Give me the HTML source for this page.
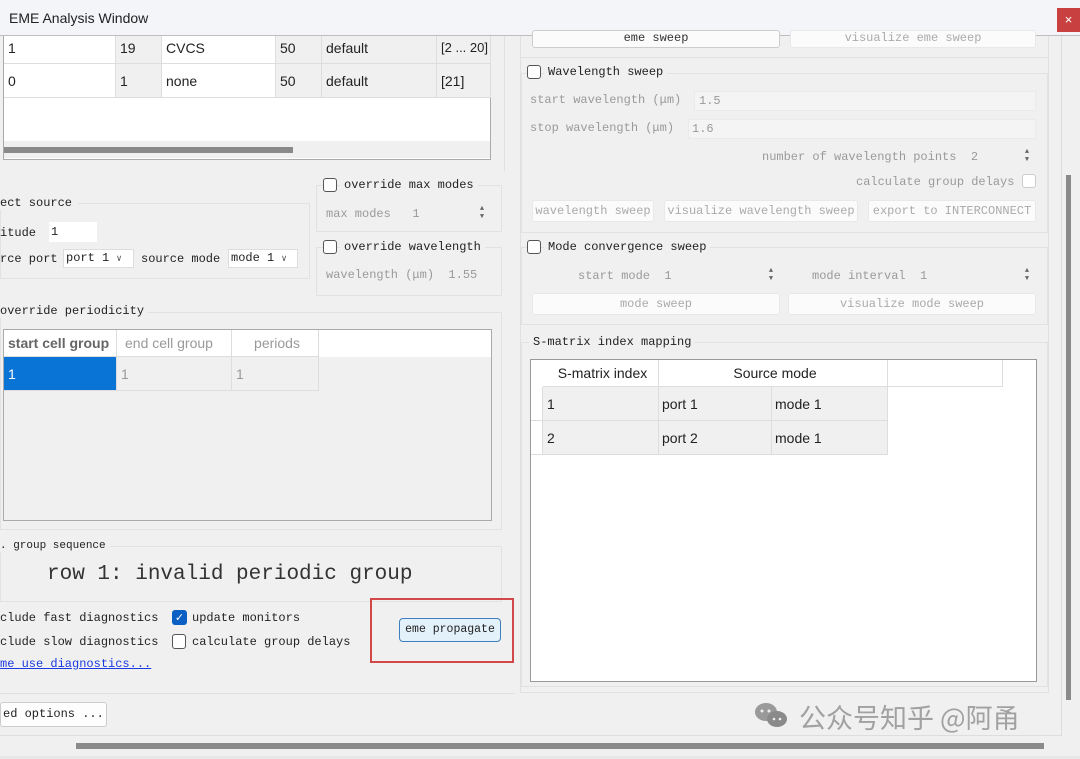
<!DOCTYPE html>
<html><head><meta charset="utf-8">
<style>
*{box-sizing:border-box;margin:0;padding:0}
body{width:1080px;height:759px;overflow:hidden;background:#f0f0f0;position:relative;font-family:"Liberation Mono",monospace;font-size:12px;color:#222}
.a{position:absolute}
.sans{font-family:"Liberation Sans",sans-serif}
.m{font-family:"Liberation Mono",monospace;font-size:12px;white-space:nowrap}
.g{color:#9a9a9a}
.grp{position:absolute;border:1px solid #e2e2e2}
.cb{position:absolute;width:14px;height:14px;border:1px solid #555;border-radius:3px;background:#fff}
.btn{position:absolute;background:#fbfbfb;border:1px solid #e8e8e8;border-radius:3px;text-align:center;color:#aaa;font-family:"Liberation Mono",monospace;font-size:12px;white-space:nowrap}
.inp{position:absolute;background:#f4f4f4;border:1px solid #eaeaea}
.cell{position:absolute;font-family:"Liberation Sans",sans-serif;font-size:14px;padding-left:4px;border-right:1px solid #ddd;border-bottom:1px solid #ddd}
.spin{position:absolute;width:10px;height:16px;font-size:7px;line-height:8px;color:#666;text-align:center}
</style></head><body>
<!-- title bar -->
<div class="a" style="left:0;top:0;width:1080px;height:36px;background:#f3f5f9;border-bottom:1px solid #bdbdbd"></div>
<div class="a sans" style="left:9px;top:10px;font-size:14px;color:#222">EME Analysis Window</div>
<div class="a" style="left:1057px;top:8px;width:23px;height:24px;background:#c94040;color:#fff;text-align:center;font:13px/24px 'Liberation Sans',sans-serif">×</div>

<!-- top table -->
<div class="a" style="left:3px;top:36px;width:488px;height:124px;background:#fff;border:1px solid #aaa;border-top:none"></div>
<div class="cell" style="left:4px;top:36px;width:112px;height:28px;line-height:24px;background:#fff">1</div>
<div class="cell" style="left:116px;top:36px;width:46px;height:28px;line-height:24px;background:#f0f0f0">19</div>
<div class="cell" style="left:162px;top:36px;width:114px;height:28px;line-height:24px;background:#fff">CVCS</div>
<div class="cell" style="left:276px;top:36px;width:46px;height:28px;line-height:24px;background:#f0f0f0">50</div>
<div class="cell" style="left:322px;top:36px;width:115px;height:28px;line-height:24px;background:#f0f0f0">default</div>
<div class="cell" style="left:437px;top:36px;width:54px;height:28px;line-height:24px;background:#f0f0f0;font-size:13px">[2 ... 20]</div>
<div class="cell" style="left:4px;top:64px;width:112px;height:34px;line-height:34px;background:#fff">0</div>
<div class="cell" style="left:116px;top:64px;width:46px;height:34px;line-height:34px;background:#f0f0f0">1</div>
<div class="cell" style="left:162px;top:64px;width:114px;height:34px;line-height:34px;background:#fff">none</div>
<div class="cell" style="left:276px;top:64px;width:46px;height:34px;line-height:34px;background:#f0f0f0">50</div>
<div class="cell" style="left:322px;top:64px;width:115px;height:34px;line-height:34px;background:#f0f0f0">default</div>
<div class="cell" style="left:437px;top:64px;width:54px;height:34px;line-height:34px;background:#f0f0f0">[21]</div>
<div class="a" style="left:4px;top:141px;width:486px;height:17px;background:#f0f0f0"></div>
<div class="a" style="left:4px;top:147px;width:289px;height:6px;background:#8a8a8a"></div>
<div class="a" style="left:504px;top:36px;width:1px;height:135px;background:#e0e0e0"></div>

<!-- source group -->
<div class="grp" style="left:0;top:203px;width:310px;height:76px"></div>
<div class="a m" style="left:0;top:196px;background:#f0f0f0;padding-right:6px">ect source</div>
<div class="a m" style="left:0;top:226px">itude</div>
<div class="a m" style="left:49px;top:222px;width:48px;height:20px;background:#fff;line-height:20px;padding-left:2px">1</div>
<div class="a m" style="left:0;top:252px">rce port</div>
<div class="a m" style="left:63px;top:249px;width:71px;height:19px;background:#fff;border:1px solid #ddd;line-height:17px;padding-left:2px">port 1 <span style="font-size:9px;color:#555">&#8744;</span></div>
<div class="a m" style="left:141px;top:252px">source mode</div>
<div class="a m" style="left:228px;top:249px;width:70px;height:19px;background:#fff;border:1px solid #ddd;line-height:17px;padding-left:2px">mode 1 <span style="font-size:9px;color:#555">&#8744;</span></div>

<!-- override max modes -->
<div class="grp" style="left:316px;top:185px;width:186px;height:47px"></div>
<div class="cb" style="left:323px;top:178px"></div>
<div class="a m" style="left:340px;top:178px;background:#f0f0f0;padding:0 4px">override max modes</div>
<div class="a m g" style="left:326px;top:207px">max modes&nbsp;&nbsp;&nbsp;1</div>
<div class="spin" style="left:477px;top:205px">▲<br>▼</div>
<div class="grp" style="left:316px;top:247px;width:186px;height:49px"></div>
<div class="cb" style="left:323px;top:240px"></div>
<div class="a m" style="left:340px;top:240px;background:#f0f0f0;padding:0 4px">override wavelength</div>
<div class="a m g" style="left:326px;top:268px">wavelength (μm)&nbsp;&nbsp;1.55</div>

<!-- override periodicity -->
<div class="grp" style="left:0;top:312px;width:502px;height:218px"></div>
<div class="a m" style="left:0;top:304px;background:#f0f0f0;padding-right:4px">override periodicity</div>
<div class="a" style="left:3px;top:329px;width:489px;height:192px;border:1px solid #aaa;background:#f0f0f0"></div>
<div class="a" style="left:4px;top:330px;width:487px;height:27px;background:#fff"></div>
<div class="cell" style="left:4px;top:330px;width:113px;height:27px;line-height:27px;font-weight:bold;color:#666;background:#fff">start cell group</div>
<div class="cell g" style="left:117px;top:330px;width:115px;height:27px;line-height:27px;background:#fff;padding-left:8px">end cell group</div>
<div class="cell g" style="left:232px;top:330px;width:87px;height:27px;line-height:27px;background:#fff;text-align:center">periods</div>
<div class="cell" style="left:4px;top:357px;width:113px;height:34px;line-height:34px;background:#0a74d6;color:#fff">1</div>
<div class="cell g" style="left:117px;top:357px;width:115px;height:34px;line-height:34px;background:#f0f0f0">1</div>
<div class="cell g" style="left:232px;top:357px;width:87px;height:34px;line-height:34px;background:#f0f0f0">1</div>

<!-- group sequence -->
<div class="grp" style="left:0;top:546px;width:502px;height:56px"></div>
<div class="a m" style="left:0;top:540px;font-size:11px;background:#f0f0f0;padding-right:4px">. group sequence</div>
<div class="a" style="left:47px;top:563px;font-family:'Liberation Mono',monospace;font-size:21px;color:#333;white-space:nowrap">row 1: invalid periodic group</div>

<!-- diagnostics -->
<div class="a m" style="left:0;top:611px">clude fast diagnostics</div>
<div class="a" style="left:172px;top:610px;width:15px;height:15px;background:#0a5fc4;border-radius:3px;color:#fff;font:11px/15px 'DejaVu Sans',sans-serif;text-align:center">✓</div>
<div class="a m" style="left:192px;top:611px">update monitors</div>
<div class="a m" style="left:0;top:635px">clude slow diagnostics</div>
<div class="cb" style="left:172px;top:634px;height:15px;width:14px"></div>
<div class="a m" style="left:192px;top:635px">calculate group delays</div>
<div class="a m" style="left:0;top:657px;color:#1a3be0;text-decoration:underline">me use diagnostics...</div>
<div class="a" style="left:370px;top:598px;width:144px;height:65px;border:2px solid #d24848"></div>
<div class="a m" style="left:399px;top:618px;width:102px;height:24px;background:#e3f1fb;border:1px solid #3d7fc0;border-radius:4px;line-height:22px;text-align:center;font-size:11.5px">eme propagate</div>
<div class="a" style="left:0;top:693px;width:515px;height:1px;background:#e0e0e0"></div>
<div class="a m" style="left:0;top:702px;width:107px;height:25px;background:#fdfdfd;border:1px solid #ccc;border-radius:3px;line-height:23px;padding-left:2px">ed options ...</div>

<!-- right panel -->
<div class="a" style="left:520px;top:36px;width:529px;height:657px;border:1px solid #e0e0e0;border-top:none"></div>
<div class="btn" style="left:532px;top:30px;width:248px;height:18px;color:#333;line-height:14px;border-color:#ccc">eme sweep</div>
<div class="btn" style="left:790px;top:30px;width:246px;height:18px;line-height:14px">visualize eme sweep</div>
<div class="a" style="left:520px;top:57px;width:528px;height:1px;background:#e0e0e0"></div>

<div class="grp" style="left:521px;top:73px;width:527px;height:160px"></div>
<div class="cb" style="left:527px;top:65px"></div>
<div class="a m" style="left:544px;top:65px;background:#f0f0f0;padding:0 4px">Wavelength sweep</div>
<div class="a m g" style="left:530px;top:93px">start wavelength (μm)</div>
<div class="inp" style="left:694px;top:91px;width:342px;height:20px"></div>
<div class="a m g" style="left:699px;top:94px">1.5</div>
<div class="a m g" style="left:530px;top:121px">stop wavelength (μm)</div>
<div class="inp" style="left:688px;top:119px;width:348px;height:20px"></div>
<div class="a m g" style="left:692px;top:122px">1.6</div>
<div class="a m g" style="left:762px;top:150px">number of wavelength points&nbsp;&nbsp;2</div>
<div class="spin" style="left:1022px;top:148px">▲<br>▼</div>
<div class="a m g" style="left:856px;top:175px">calculate group delays</div>
<div class="cb" style="left:1022px;top:174px;border-color:#ccc"></div>
<div class="btn" style="left:532px;top:200px;width:122px;height:22px;line-height:20px">wavelength sweep</div>
<div class="btn" style="left:664px;top:200px;width:194px;height:22px;line-height:20px">visualize wavelength sweep</div>
<div class="btn" style="left:868px;top:200px;width:168px;height:22px;line-height:20px">export to INTERCONNECT</div>

<div class="grp" style="left:521px;top:247px;width:527px;height:78px"></div>
<div class="cb" style="left:527px;top:240px"></div>
<div class="a m" style="left:544px;top:240px;background:#f0f0f0;padding:0 4px">Mode convergence sweep</div>
<div class="a m g" style="left:578px;top:269px">start mode&nbsp;&nbsp;1</div>
<div class="spin" style="left:766px;top:267px">▲<br>▼</div>
<div class="a m g" style="left:812px;top:269px">mode interval&nbsp;&nbsp;1</div>
<div class="spin" style="left:1022px;top:267px">▲<br>▼</div>
<div class="btn" style="left:532px;top:293px;width:248px;height:22px;line-height:20px">mode sweep</div>
<div class="btn" style="left:788px;top:293px;width:248px;height:22px;line-height:20px">visualize mode sweep</div>

<div class="grp" style="left:521px;top:342px;width:527px;height:345px"></div>
<div class="a m" style="left:529px;top:335px;background:#f0f0f0;padding:0 4px">S-matrix index mapping</div>
<div class="a" style="left:530px;top:359px;width:507px;height:323px;background:#fff;border:1px solid #999"></div>
<div class="a" style="left:531px;top:360px;width:12px;height:26px;background:#fff"></div>
<div class="cell" style="left:543px;top:360px;width:116px;height:27px;line-height:27px;background:#fff;text-align:center">S-matrix index</div>
<div class="cell" style="left:659px;top:360px;width:229px;height:27px;line-height:27px;background:#fff;text-align:center">Source mode</div>
<div class="cell" style="left:888px;top:360px;width:115px;height:27px;background:#fff"></div>
<div class="a" style="left:531px;top:387px;width:12px;height:68px;border-bottom:1px solid #ddd;border-right:1px solid #ddd"></div>
<div class="a" style="left:531px;top:420px;width:12px;height:1px;background:#ddd"></div>
<div class="cell" style="left:543px;top:387px;width:116px;height:34px;line-height:34px;background:#f0f0f0">1</div>
<div class="cell" style="left:659px;top:387px;width:113px;height:34px;line-height:34px;background:#f0f0f0;padding-left:3px">port 1</div>
<div class="cell" style="left:772px;top:387px;width:116px;height:34px;line-height:34px;background:#f0f0f0;padding-left:3px">mode 1</div>
<div class="cell" style="left:543px;top:421px;width:116px;height:34px;line-height:34px;background:#f0f0f0">2</div>
<div class="cell" style="left:659px;top:421px;width:113px;height:34px;line-height:34px;background:#f0f0f0;padding-left:3px">port 2</div>
<div class="cell" style="left:772px;top:421px;width:116px;height:34px;line-height:34px;background:#f0f0f0;padding-left:3px">mode 1</div>

<!-- right scrollbar -->
<div class="a" style="left:1061px;top:36px;width:1px;height:700px;background:#ddd"></div>
<div class="a" style="left:1066px;top:175px;width:5px;height:525px;background:#8a8a8a"></div>

<!-- watermark / bottom -->
<div class="a" style="left:752px;top:700px;width:40px;height:30px">
<svg width="40" height="30" viewBox="0 0 40 30"><ellipse cx="14" cy="12" rx="11" ry="9" fill="#9a9a9a"/><ellipse cx="25" cy="19" rx="10" ry="8" fill="#8a8a8a"/><circle cx="10" cy="11" r="1.5" fill="#eee"/><circle cx="17" cy="11" r="1.5" fill="#eee"/><circle cx="22" cy="19" r="1.3" fill="#eee"/><circle cx="28" cy="19" r="1.3" fill="#eee"/></svg></div>
<div class="a" style="left:799px;top:697px;font:27px 'Noto Sans CJK SC',sans-serif;color:#999;white-space:nowrap;opacity:.9">公众号知乎 @阿甬</div>
<div class="a" style="left:0;top:735px;width:1061px;height:1px;background:#ddd"></div>
<div class="a" style="left:76px;top:743px;width:968px;height:6px;background:#8a8a8a"></div>
<div class="a" style="left:0;top:756px;width:1080px;height:3px;background:#e8e8e8"></div>
</body></html>
